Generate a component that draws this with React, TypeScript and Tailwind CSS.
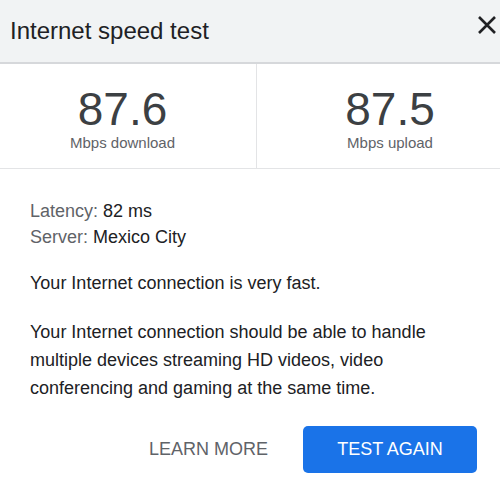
import React from 'react';

export default function App() {
  return (
    <div className="w-[500px] h-[489px] bg-white overflow-hidden font-['Liberation_Sans',Arial,sans-serif]">
      <div className="h-[64px] bg-[#f1f3f4] border-b-2 border-[#d6d8db] flex justify-between items-start pl-[10px] pr-[3px]">
        <h1 className="mt-[19px] text-[24px] leading-none text-[#202124]">Internet speed test</h1>
        <button className="mt-[15px] w-[20px] h-[20px] flex items-center justify-center">
          <svg width="20" height="20" viewBox="0 0 20 20">
            <path d="M2 2 L18 18 M18 2 L2 18" stroke="#202124" strokeWidth="2.6" fill="none" />
          </svg>
        </button>
      </div>

      <div className="flex border-b border-[#e3e4e6]">
        <div className="w-[257px] border-r border-[#e3e4e6] pr-[11px] pt-[25px] pb-[17px] flex flex-col items-center">
          <div className="text-[46px] leading-[40px] text-[#3c4043]">87.6</div>
          <div className="mt-[6px] text-[15px] leading-[16px] text-[#5f6368]">Mbps download</div>
        </div>
        <div className="flex-1 pl-[23px] pt-[25px] pb-[17px] flex flex-col items-center">
          <div className="text-[46px] leading-[40px] text-[#3c4043]">87.5</div>
          <div className="mt-[6px] text-[15px] leading-[16px] text-[#5f6368]">Mbps upload</div>
        </div>
      </div>

      <div className="pl-[30px] pr-[40px] pt-[29px] text-[18px] text-[#202124]">
        <div className="leading-[26px]">
          <div><span className="text-[#5f6368]">Latency:</span> 82 ms</div>
          <div><span className="text-[#5f6368]">Server:</span> Mexico City</div>
        </div>
        <p className="mt-[19px] leading-[28px]">Your Internet connection is very fast.</p>
        <p className="mt-[21px] leading-[28px]">
          Your Internet connection should be able to handle multiple devices streaming HD videos, video
          conferencing and gaming at the same time.
        </p>
      </div>

      <div className="mt-[24px] flex justify-end items-center gap-[35px] pr-[23px]">
        <button className="text-[18px] text-[#5f6368]">LEARN MORE</button>
        <button className="w-[174px] h-[47px] rounded-[5px] bg-[#1a73e8] text-white text-[18px]">TEST AGAIN</button>
      </div>
    </div>
  );
}
